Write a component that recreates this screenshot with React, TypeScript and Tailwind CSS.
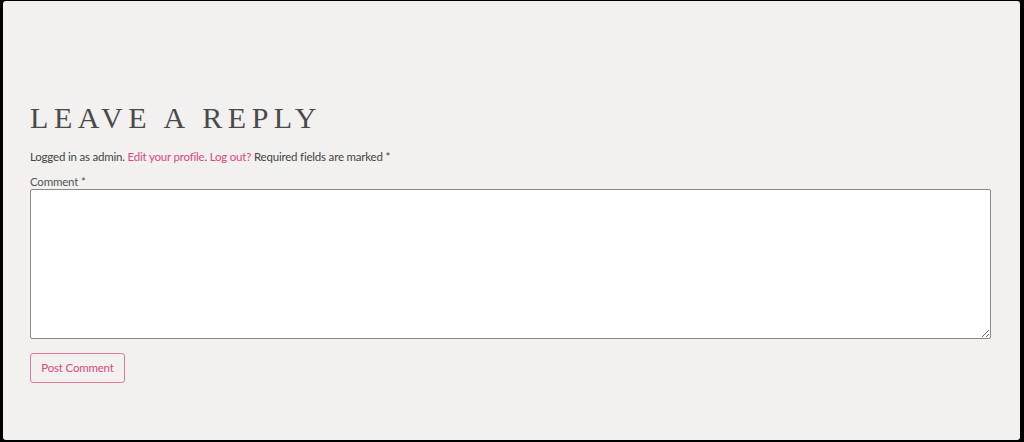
export default function App() {
    return (
        <div className="flex h-[442px] w-full bg-black pb-[2px] pl-[3px] pr-[4px] pt-[1px]">
            <div className="flex-1 rounded-[3px] bg-[#f2f1ef] pl-[27px] pr-[29px] pt-[101px] font-['Lato','Noto_Sans',sans-serif] text-[#444]">
                <h2 className="font-['Liberation_Serif',serif] text-[30px] font-normal leading-[32px] tracking-[0.185em] text-[#4a4a4a]">
                    LEAVE A REPLY
                </h2>

                <p className="mt-[14px] text-[11.5px] leading-[18px] tracking-[-0.2px]">
                    Logged in as admin.{" "}
                    <a href="#" className="text-[#d9497f]">Edit your profile</a>.{" "}
                    <a href="#" className="text-[#d9497f]">Log out?</a> Required fields are marked *
                </p>

                <form className="mt-[8px]">
                    <label htmlFor="comment" className="block text-[11.5px] leading-[15px] tracking-[-0.2px] text-[#555]">
                        Comment *
                    </label>
                    <textarea
                        id="comment"
                        className="block h-[150px] w-full rounded-[2px] border border-[#8a8a8a] bg-white"
                    />
                    <button
                        type="button"
                        className="mt-[14px] h-[30px] w-[95px] rounded-[3px] border border-[#e0789f] text-[11.5px] tracking-[-0.2px] text-[#d9497f]"
                    >
                        Post Comment
                    </button>
                </form>
            </div>
        </div>
    );
}
